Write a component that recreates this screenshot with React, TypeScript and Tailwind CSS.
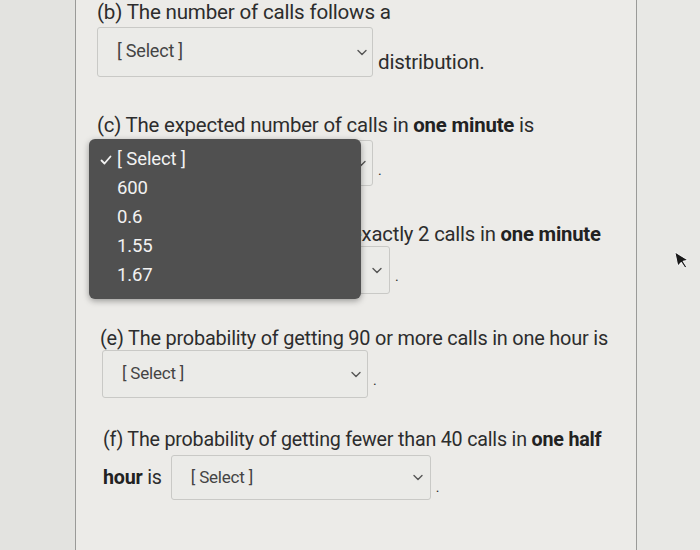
import React from "react";

function Chevron() {
  return (
    <svg width="10" height="7" viewBox="0 0 10 7" className="shrink-0">
      <path d="M1 1.5 L5 5.5 L9 1.5" fill="none" stroke="#555" strokeWidth="1.4" strokeLinecap="round" strokeLinejoin="round" />
    </svg>
  );
}

function SelectBox({ w, h, chevronPr = "pr-[8px]", text = "text-[17px]" }: { w: string; h: string; chevronPr?: string; text?: string }) {
  return (
    <div className={`${w} ${h} shrink-0 rounded-[3px] border border-[#c9c9c6] bg-[#ebebe8] flex items-center justify-between pl-[19px] ${chevronPr}`}>
      <span className={`${text} text-[#444] -mt-[2px]`}>[ Select ]</span>
      <Chevron />
    </div>
  );
}

export default function App() {
  return (
    <div
      className="relative w-[700px] h-[550px] overflow-hidden bg-[#e9e9e6] flex text-[#2d2d2d]"
      style={{ fontFamily: "Roboto, 'Noto Sans', sans-serif" }}
    >
      <div className="w-[75px] shrink-0 bg-[#e3e3e0]" />
      <div className="w-[562px] shrink-0 border-l border-r border-[#9a9a98] bg-[#ecebe8] pl-[21px] leading-[24px] tracking-[-0.2px]">
        {/* (b) */}
        <div className="text-[20.6px]">
          <p className="mt-[0px]">(b) The number of calls follows a</p>
          <div className="flex items-end mt-[3px]">
            <SelectBox w="w-[276px]" h="h-[50px]" chevronPr="pr-[5px]" text="text-[18px]" />
            <span className="ml-[5px] mb-[3px]">distribution.</span>
          </div>
        </div>

        {/* (c) */}
        <div className="text-[20.4px]">
          <p className="mt-[36px]">
            (c) The expected number of calls in <b className="font-bold text-[#222]">one minute</b> is
          </p>
          <div className="flex items-end mt-[3px]">
            <SelectBox w="w-[276px]" h="h-[46px]" chevronPr="pr-[6px]" />
            <span className="ml-[5px] mb-[4px] text-[14px]">.</span>
          </div>
        </div>

        {/* (d) */}
        <div className="text-[20.3px]">
          <p className="mt-[36px]">
            (d) The probability of getting exactly 2 calls in <b className="font-bold text-[#222]">one minute</b>
          </p>
          <div className="flex items-end">
            <SelectBox w="w-[293px]" h="h-[48px]" chevronPr="pr-[7px]" />
            <span className="ml-[5px] mb-[6px] text-[14px]">.</span>
          </div>
        </div>

        {/* (e) */}
        <div className="text-[19.9px]">
          <p className="mt-[33px] pl-[3px]">(e) The probability of getting 90 or more calls in one hour is</p>
          <div className="flex items-end -mt-[1px] pl-[5px]">
            <SelectBox w="w-[266px]" h="h-[48px]" chevronPr="pr-[6px]" />
            <span className="ml-[5px] mb-[6px] text-[14px]">.</span>
          </div>
        </div>

        {/* (f) */}
        <div className="text-[19.7px]">
          <p className="mt-[30px] pl-[6px]">
            (f) The probability of getting fewer than 40 calls in <b className="font-bold text-[#222]">one half</b>
          </p>
          <div className="flex items-center mt-[3px] pl-[6px]">
            <span className="mr-[9px]">
              <b className="font-bold text-[#222]">hour</b> is
            </span>
            <SelectBox w="w-[260px]" h="h-[45px]" chevronPr="pr-[7px]" />
            <span className="ml-[5px] mt-[18px] text-[14px]">.</span>
          </div>
        </div>
      </div>
      <div className="flex-1 bg-[#e8e8e5]" />

      {/* open dropdown menu */}
      <div className="absolute left-[89px] top-[139px] w-[272px] h-[160px] rounded-[6px] bg-[#505050] shadow-[0_2px_6px_rgba(0,0,0,0.35)] pt-[6px] text-[#f2f2f2] text-[18.5px] tracking-[-0.1px]">
        {["[ Select ]", "600", "0.6", "1.55", "1.67"].map((t, i) => (
          <div key={t} className="h-[29px] flex items-center">
            <span className="w-[28px] flex justify-end pr-[5px]">
              {i === 0 && (
                <svg width="12" height="10" viewBox="0 0 12 10">
                  <path d="M1.5 5.5 L4.5 8.5 L10.5 1.5" fill="none" stroke="#f2f2f2" strokeWidth="1.8" strokeLinecap="round" strokeLinejoin="round" />
                </svg>
              )}
            </span>
            <span>{t}</span>
          </div>
        ))}
      </div>

      {/* mouse cursor */}
      <svg className="absolute left-[673px] top-[249px]" width="18" height="22" viewBox="0 0 18 22">
        <path d="M3 2 L15 12 L10 12.3 L12.8 18.5 L10.8 19.4 L8 13.3 L4 16.5 Z" fill="#1a1a1a" stroke="#f5f5f5" strokeWidth="1" strokeLinejoin="round" transform="rotate(-8 9 11)" />
      </svg>
    </div>
  );
}
